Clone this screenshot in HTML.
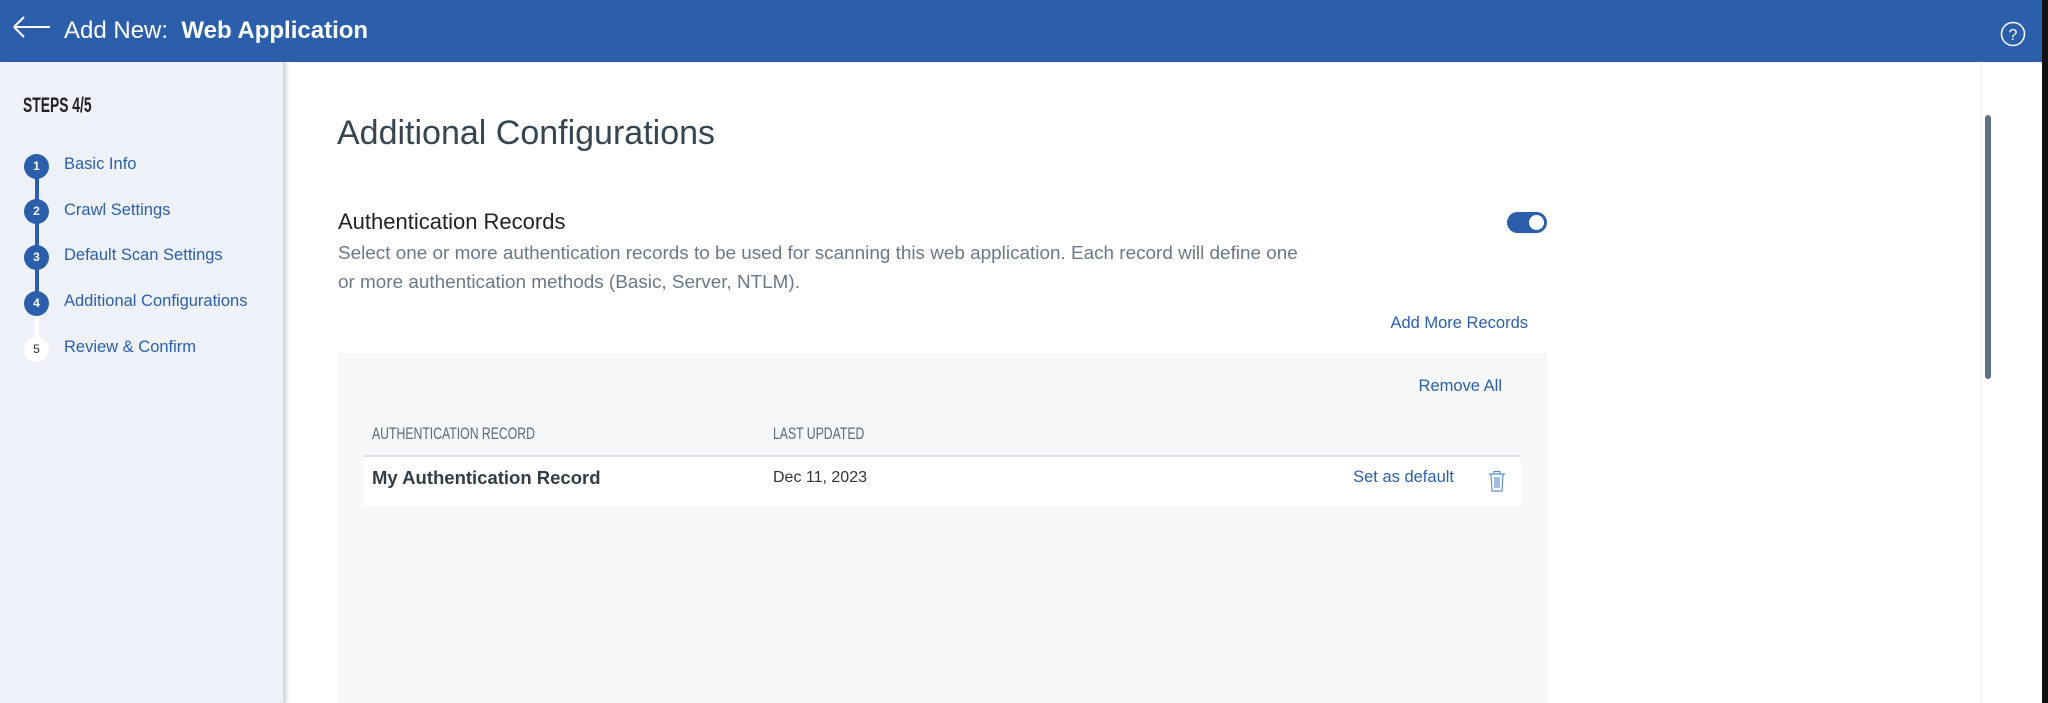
<!DOCTYPE html>
<html><head><meta charset="utf-8"><style>
*{margin:0;padding:0;box-sizing:border-box}
body{width:2048px;height:703px;overflow:hidden;background:#fff;font-family:"Liberation Sans",sans-serif;position:relative}
.abs{position:absolute;white-space:nowrap}
.hdr{position:absolute;left:0;top:0;width:2042px;height:62px;background:#2b5fab}
.edge{position:absolute;right:0;top:0;width:6px;height:703px;background:#111}
.side{position:absolute;left:0;top:62px;width:285px;height:641px;background:#eef2f8;box-shadow:2px 0 3px rgba(0,0,0,.15);border-right:2px solid #d6dbe2}
.cond{transform:scaleX(0.72);transform-origin:left top}
.circ{position:absolute;left:24px;width:25px;height:25px;border-radius:50%;background:#2b5fab;color:#fff;font-size:12px;font-weight:bold;text-align:center;line-height:25px}
.step{position:absolute;left:64px;font-size:16.5px;color:#2b5fab}
.blue{color:#2b5fab}
</style></head><body>
<div class="hdr"></div>
<svg class="abs" style="left:12px;top:15px" width="40" height="24"><path d="M2 12H38M2 12L12 2M2 12L12 22" stroke="#fff" stroke-width="2" fill="none"/></svg>
<div class="abs" style="left:64px;top:17px;font-size:24px;color:#fff">Add New:&nbsp; <b>Web Application</b></div>
<svg class="abs" style="left:2000px;top:21px" width="26" height="26"><circle cx="13" cy="13" r="11.5" stroke="#fff" stroke-width="1.5" fill="none"/><text x="13" y="19" fill="#fff" font-size="16" text-anchor="middle" font-family="Liberation Sans">?</text></svg>
<div class="edge"></div>
<div class="side"></div>
<div class="abs cond" style="left:23px;top:94px;font-size:21px;color:#222;font-weight:bold;transform:scaleX(0.66)">STEPS 4/5</div>
<div class="abs" style="left:34.5px;top:166px;width:4px;height:137px;background:#2b5fab"></div>
<div class="abs" style="left:34.5px;top:303px;width:4px;height:46px;background:#fff"></div>
<div class="circ" style="top:154px">1</div>
<div class="circ" style="top:199px">2</div>
<div class="circ" style="top:245px">3</div>
<div class="circ" style="top:291px">4</div>
<div class="circ" style="top:337px;background:#fff;color:#333;font-weight:normal">5</div>
<div class="step" style="top:155px">Basic Info</div>
<div class="step" style="top:201px">Crawl Settings</div>
<div class="step" style="top:246px">Default Scan Settings</div>
<div class="step" style="top:292px">Additional Configurations</div>
<div class="step" style="top:338px">Review &amp; Confirm</div>

<div class="abs" style="left:337px;top:114px;font-size:34px;color:#364550">Additional Configurations</div>
<div class="abs" style="left:338px;top:209px;font-size:22px;color:#222">Authentication Records</div>
<div class="abs" style="left:338px;top:239px;font-size:18.9px;color:#6b7885;line-height:29px">Select one or more authentication records to be used for scanning this web application. Each record will define one<br>or more authentication methods (Basic, Server, NTLM).</div>
<div class="abs" style="left:1507px;top:212px;width:40px;height:21px;border-radius:11px;background:#2b5fab"></div>
<div class="abs" style="left:1529px;top:215px;width:15px;height:15px;border-radius:50%;background:#fff"></div>
<div class="abs blue" style="right:520px;top:314px;font-size:16.5px">Add More Records</div>
<div class="abs" style="left:338px;top:353px;width:1209px;height:350px;background:#f5f7f9"></div>
<div class="abs blue" style="right:546px;top:377px;font-size:16.5px">Remove All</div>
<div class="abs cond" style="left:372px;top:424px;font-size:17px;color:#5a6a78">AUTHENTICATION RECORD</div>
<div class="abs cond" style="left:773px;top:424px;font-size:17px;color:#5a6a78">LAST UPDATED</div>
<div class="abs" style="left:363px;top:455px;width:1158px;height:51px;background:#fff;border-top:2px solid #dde1e5"></div>
<div class="abs" style="left:372px;top:467px;font-size:18.5px;font-weight:bold;color:#333d45">My Authentication Record</div>
<div class="abs" style="left:773px;top:469px;font-size:16px;color:#333">Dec 11, 2023</div>
<div class="abs blue" style="right:594px;top:468px;font-size:16.5px">Set as default</div>
<svg class="abs" style="left:1488px;top:470px" width="18" height="22"><path d="M1 4H17M6 4V1.5H12V4M3 4L4 21H14L15 4M7 7V18M9 7V18M11 7V18" stroke="#5f8fd0" stroke-width="1.2" fill="none"/></svg>
<div class="abs" style="left:1981px;top:62px;width:1px;height:641px;background:#eee"></div>
<div class="abs" style="left:1985px;top:115px;width:6px;height:264px;border-radius:3px;background:#5f7080"></div>
</body></html>
